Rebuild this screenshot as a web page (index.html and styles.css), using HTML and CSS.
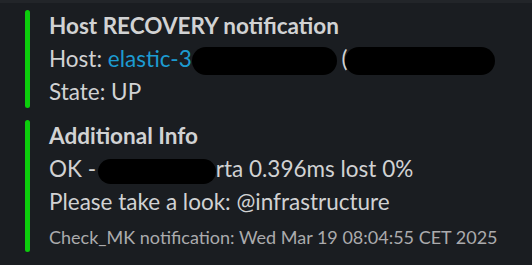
FILE: index.html
```html
<!DOCTYPE html>
<html lang="en">
<head>
    <meta charset="UTF-8">
    <title>Check_MK notification</title>
    <link rel="stylesheet" href="styles.css">
</head>
<body>
    <div class="topbar"></div>
    <div class="message">
        <div class="attachment">
            <div class="bar"></div>
            <div class="content">
                <div class="title">Host RECOVERY notification</div>
                <div class="line">Host: <a class="link">elastic-3</a><span class="redact r1"></span> (<span class="redact r2"></span></div>
                <div class="line">State: UP</div>
            </div>
        </div>
        <div class="attachment">
            <div class="bar"></div>
            <div class="content">
                <div class="title">Additional Info</div>
                <div class="line">OK - <span class="redact r3"></span>rta 0.396ms lost 0%</div>
                <div class="line">Please take a look: @infrastructure</div>
                <div class="footer">Check_MK notification: Wed Mar 19 08:04:55 CET 2025</div>
            </div>
        </div>
    </div>
</body>
</html>
```

FILE: styles.css
```css
body {
    margin: 0;
    background: #1a1d21;
    font-family: 'Lato', 'Open Sans', sans-serif;
    color: #d1d2d3;
}

.topbar {
    height: 3px;
    background: #222529;
}

.message {
    padding: 7px 0 0 25px;
    display: flex;
    flex-direction: column;
    gap: 12px;
}

.attachment {
    display: flex;
    gap: 19px;
}

.bar {
    width: 5px;
    flex-shrink: 0;
    border-radius: 3px;
    background: #0ccd0c;
}

.content {
    display: flex;
    flex-direction: column;
}

.title {
    font-size: 22.5px;
    font-weight: 700;
    line-height: 33px;
    margin-top: -1px;
}

.line {
    font-size: 22.5px;
    line-height: 33px;
    white-space: nowrap;
}

.link {
    color: #1d9bd1;
}

.footer {
    font-size: 18px;
    line-height: 26px;
    color: #ababad;
    margin: 6px 0 2px;
}

.redact {
    display: inline-block;
    background: #000;
    border-radius: 14px;
    vertical-align: middle;
}

.r1 {
    width: 145px;
    height: 28px;
    margin-right: -1px;
}

.r2 {
    width: 150px;
    height: 28px;
    margin-left: -3px;
}

.r3 {
    width: 118px;
    height: 25px;
    margin-left: -4px;
}
```
